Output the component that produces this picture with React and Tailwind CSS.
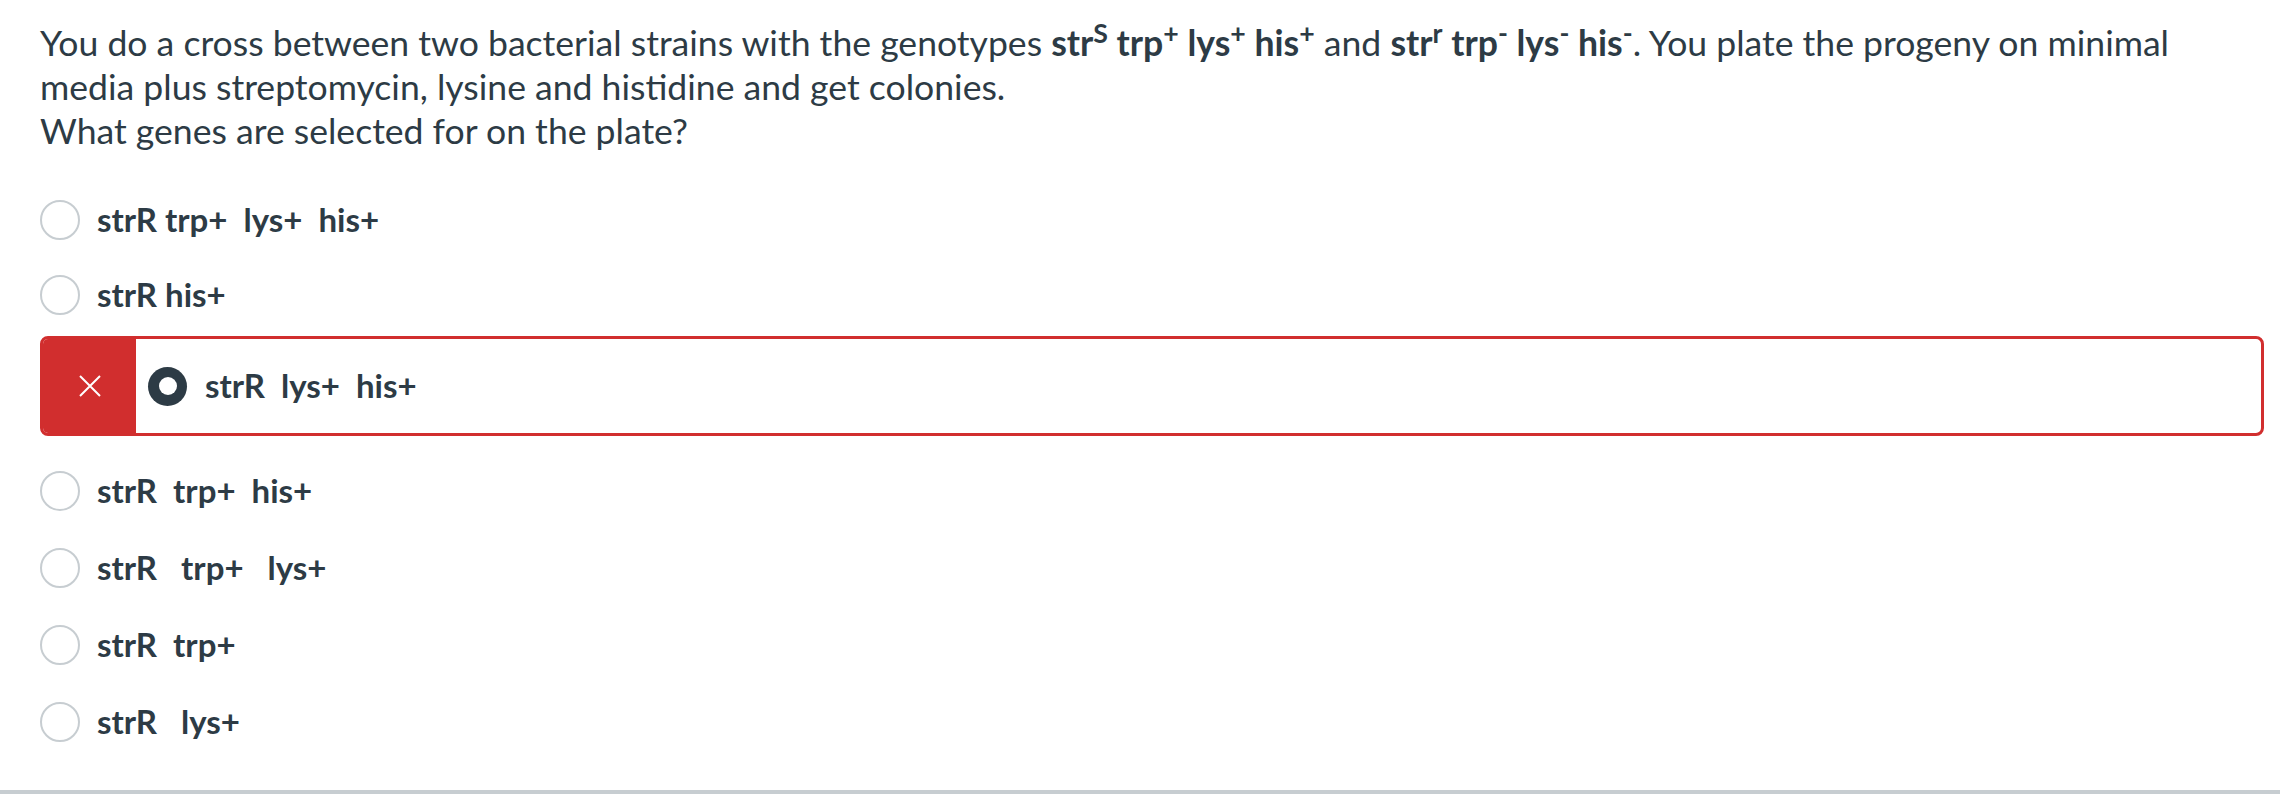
import React from 'react'

const options = [
  'strR trp+  lys+  his+',
  'strR his+',
  'strR  lys+  his+',
  'strR  trp+  his+',
  'strR   trp+   lys+',
  'strR  trp+',
  'strR   lys+',
]

function Radio({ checked }) {
  if (checked) {
    return (
      <span className="w-[39px] h-[39px] rounded-full bg-[#2d3b45] flex items-center justify-center shrink-0">
        <span className="w-[18px] h-[18px] rounded-full bg-white" />
      </span>
    )
  }
  return <span className="w-[40px] h-[40px] rounded-full border-2 border-[#c7cdd1] bg-white shrink-0" />
}

export default function App() {
  return (
    <div className="w-[2280px] h-[794px] bg-white text-[#2d3b45] font-['Lato',sans-serif] flex flex-col">
      <div className="flex-1 pl-[40px] pr-[16px] pt-[21px]">
        <p className="text-[35.6px] leading-[44px]">
          You do a cross between two bacterial strains with the genotypes{' '}
          <b>
            str<sup>S</sup> trp<sup>+</sup> lys<sup>+</sup> his<sup>+</sup>
          </b>{' '}
          and{' '}
          <b>
            str<sup>r</sup> trp<sup>-</sup> lys<sup>-</sup> his<sup>-</sup>
          </b>
          . You plate the progeny on minimal media plus streptomycin, lysine and histidine and get colonies.
          <br />
          What genes are selected for on the plate?
        </p>

        <div className="mt-[30px] flex flex-col">
          {options.map((o, i) =>
            i === 2 ? (
              <div
                key={i}
                className="mt-[3px] mb-[16px] h-[100px] flex items-center border-[3px] border-[#d12e2e] rounded-[8px] overflow-hidden"
              >
                <div className="w-[93px] h-full bg-[#d12e2e] flex items-center justify-center">
                  <svg width="22" height="22" viewBox="0 0 22 22" fill="none" stroke="white" strokeWidth="2">
                    <path d="M1 1L21 21M21 1L1 21" />
                  </svg>
                </div>
                <div className="flex items-center gap-[18px] pl-[12px]">
                  <Radio checked />
                  <span className="text-[33px] font-bold whitespace-pre">{o}</span>
                </div>
              </div>
            ) : (
              <div key={i} className={`${i === 0 ? 'h-[73px]' : 'h-[77px]'} flex items-center gap-[17px]`}>
                <Radio />
                <span className="text-[33px] font-bold whitespace-pre">{o}</span>
              </div>
            )
          )}
        </div>
      </div>
      <div className="h-[4px] bg-[#c7cdd1]" />
    </div>
  )
}
